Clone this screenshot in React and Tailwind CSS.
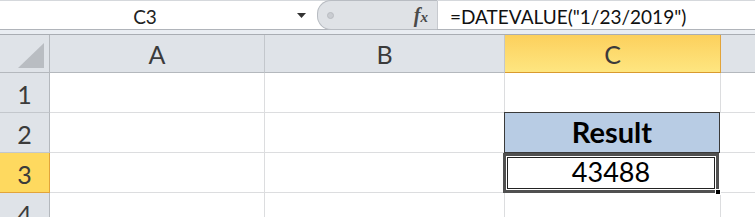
const cols = [
  { name: 'A', w: 'w-[215px]' },
  { name: 'B', w: 'w-[240px]' },
  { name: 'C', w: 'w-[216px]', active: true },
]

function ColHeader({ name, w, active }) {
  return (
    <div
      className={`${w} shrink-0 flex items-center justify-center border-r ${
        active
          ? 'border-r-[#e2a43a] border-b border-b-[#d99a2e] bg-gradient-to-b from-[#fcd05c] to-[#fee680]'
          : 'border-r-[#c3c7cc] border-b border-b-[#b4b8bd]'
      }`}
    >
      <span className="text-[25px] leading-none text-[#3b3b3b] pt-[2px]">{name}</span>
    </div>
  )
}

function Row({ n, active, children }) {
  return (
    <div className="flex h-[40px]">
      <div
        className={`w-[50px] shrink-0 flex items-center justify-center border-r border-b ${
          active
            ? 'bg-[#fed95f] border-r-[#e2a43a] border-b-[#e2a43a]'
            : 'bg-[#dfe3e8] border-r-[#b4b8bd] border-b-[#c3c7cc]'
        }`}
      >
        <span className="text-[25px] leading-none text-[#3b3b3b] pt-[3px]">{n}</span>
      </div>
      <div className="w-[215px] shrink-0 border-r border-b border-[#dcdddf] bg-white" />
      <div className="w-[240px] shrink-0 border-r border-b border-[#dcdddf] bg-white" />
      {children || <div className="w-[216px] shrink-0 border-r border-b border-[#dcdddf] bg-white" />}
      <div className="flex-1 border-b border-[#dcdddf] bg-white" />
    </div>
  )
}

export default function App() {
  return (
    <div className="w-[755px] h-[217px] overflow-hidden bg-white font-['Lato',sans-serif]">
      {/* formula bar */}
      <div className="flex h-[29px] border-t border-[#d5d8dc]">
        <div className="w-[317px] shrink-0 flex items-center bg-white">
          <span className="w-[290px] text-center text-[19px] leading-none text-[#222] pt-[2px]">C3</span>
          <svg width="9" height="5" viewBox="0 0 9 5" className="ml-[7px]">
            <path d="M0 0 H9 L4.5 5 Z" fill="#333" />
          </svg>
        </div>
        <div className="w-[120px] shrink-0 flex items-center bg-[#dfe2e6] border border-[#b8bcc2] rounded-l-[14px] border-r-0 -my-px">
          <span className="ml-[9px] w-[7px] h-[7px] rounded-full bg-[#c9ccd1] border border-[#b9bcc1]" />
          <span className="ml-auto mr-[9px] font-['Liberation_Serif',serif] italic font-bold text-[20px] leading-none text-[#4a4a4a]">
            f<span className="text-[15px]">x</span>
          </span>
        </div>
        <div className="flex-1 flex items-center border-l border-[#c7cacf] bg-white pl-[12px]">
          <span className="text-[19px] leading-none text-[#111] pt-[2px]">=DATEVALUE("1/23/2019")</span>
        </div>
      </div>
      <div className="h-[6px] border-t border-[#b0b4ba] border-b border-b-[#a9adb3] bg-[#e9edf2]" />
      {/* column headers */}
      <div className="flex h-[38px] bg-[#dfe3e8]">
        <div className="w-[50px] shrink-0 border-r border-[#b4b8bd] border-b border-b-[#b4b8bd] flex items-end justify-end pr-[5px] pb-[4px]">
          <svg width="26" height="25" viewBox="0 0 26 25">
            <path d="M26 0 V25 H0 Z" fill="#b9bdc2" />
          </svg>
        </div>
        {cols.map(c => (
          <ColHeader key={c.name} {...c} />
        ))}
        <div className="flex-1 border-b border-[#b4b8bd]" />
      </div>
      <Row n={1} />
      <Row n={2}>
        <div className="w-[216px] shrink-0 -ml-px -mt-px h-[41px] border border-[#3a3a3a] bg-[#b8cce4] flex items-end justify-center pb-[6px]">
          <span className="text-[29px] font-bold leading-none text-black">Result</span>
        </div>
      </Row>
      <Row n={3} active>
        <div className="relative w-[216px] shrink-0 -ml-[2px] h-[40px] border-[3px] border-[#505050] bg-white">
          <div className="absolute inset-px border border-[#222] flex items-end justify-center pb-[3px]">
            <span className="text-[27px] leading-none text-black">43488</span>
          </div>
          <div className="absolute -right-[5px] -bottom-[5px] w-[6px] h-[6px] bg-black border border-white" />
        </div>
      </Row>
      <Row n={4} />
    </div>
  )
}
